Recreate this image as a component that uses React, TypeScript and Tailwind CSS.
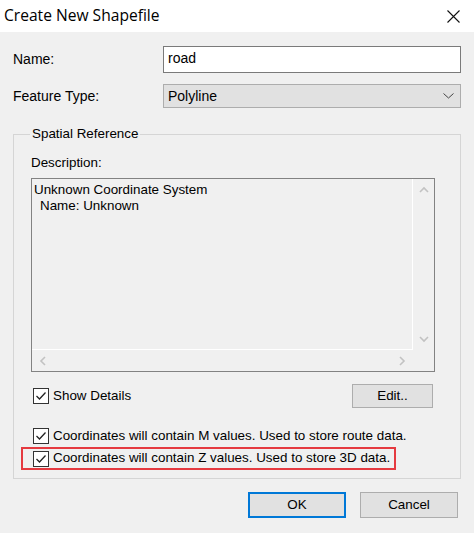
import React from 'react';

const font = { fontFamily: '"Liberation Sans", Arial, sans-serif' };

function Check() {
  return (
    <span className="flex h-[16px] w-[16px] shrink-0 items-center justify-center border border-[#333333] bg-white">
      <svg width="12" height="12" viewBox="0 0 12 12">
        <path d="M1.5 6 L4.5 9 L10.5 2.5" fill="none" stroke="#222222" strokeWidth="1.3" />
      </svg>
    </span>
  );
}

function Chevron({ dir, color = '#c2c2c2' }: { dir: 'up' | 'down' | 'left' | 'right'; color?: string }) {
  const paths = {
    up: 'M1 7 L5 3 L9 7',
    down: 'M1 3 L5 7 L9 3',
    left: 'M7 1 L3 5 L7 9',
    right: 'M3 1 L7 5 L3 9',
  };
  return (
    <svg width="10" height="10" viewBox="0 0 10 10">
      <path d={paths[dir]} fill="none" stroke={color} strokeWidth="1.6" />
    </svg>
  );
}

export default function App() {
  return (
    <div className="flex h-[533px] w-[474px] flex-col bg-[#f0f0f0] text-[13.4px] text-black" style={font}>
      {/* title bar */}
      <div className="flex h-[32px] shrink-0 items-center justify-between bg-white pl-[4px] pr-[14px]">
        <span className="text-[15.6px]" style={{ fontFamily: '"Open Sans", sans-serif' }}>Create New Shapefile</span>
        <svg width="13" height="13" viewBox="0 0 13 13">
          <path d="M0.5 0.5 L12.5 12.5 M12.5 0.5 L0.5 12.5" stroke="#111111" strokeWidth="1.1" />
        </svg>
      </div>

      <div className="flex flex-col px-[13px]">
        <div className="mt-[14px] flex h-[27px] items-center">
          <span className="w-[150px] text-[14px]">Name:</span>
          <div className="flex h-[27px] flex-1 items-center border border-[#7a7a7a] bg-white px-[4px] pb-[2px] text-[14px]">road</div>
        </div>

        <div className="mt-[11px] flex h-[24px] items-center">
          <span className="w-[150px] text-[14px]">Feature Type:</span>
          <div className="flex h-[24px] flex-1 items-center justify-between border border-[#adadad] bg-[#e1e1e1] pl-[4px] pr-[6px] text-[14px]">
            <span>Polyline</span>
            <svg width="11" height="6" viewBox="0 0 11 6">
              <path d="M0.5 0.5 L5.5 5 L10.5 0.5" fill="none" stroke="#444444" strokeWidth="1" />
            </svg>
          </div>
        </div>

        <fieldset className="mt-[18px] border border-[#d5d5d5] pb-[8px] pl-[7px]">
          <legend className="ml-[9px] px-[2px] leading-[16px]">Spatial Reference</legend>

          <div className="ml-[10px] mt-[13px] leading-[16px]">Description:</div>

          <div className="ml-[10px] mt-[7px] grid h-[194px] w-[404px] grid-cols-[1fr_21px] grid-rows-[1fr_21px] border border-[#828282]">
            <div className="border-b border-r border-white pl-[2px] pt-[3px] leading-[16px]">
              <div>Unknown Coordinate System</div>
              <div className="ml-[6px]">Name: Unknown</div>
            </div>
            <div className="flex flex-col items-center justify-between py-[6px]">
              <Chevron dir="up" />
              <Chevron dir="down" />
            </div>
            <div className="flex items-center justify-between px-[6px]">
              <Chevron dir="left" />
              <Chevron dir="right" />
            </div>
            <div />
          </div>

          <div className="ml-[10px] mt-[12px] flex h-[24px] w-[404px] items-center justify-between pl-[2px] pr-[2px]">
            <label className="flex items-center gap-[4px]">
              <Check />
              <span>Show Details</span>
            </label>
            <button className="flex h-[24px] w-[81px] items-center justify-center border border-[#adadad] bg-[#e1e1e1]">
              Edit..
            </button>
          </div>

          <label className="ml-[12px] mt-[18px] flex h-[20px] items-center gap-[4px] whitespace-nowrap">
            <Check />
            <span>Coordinates will contain M values. Used to store route data.</span>
          </label>

          <label className="mt-[1px] flex h-[23px] w-[375px] items-center gap-[4px] whitespace-nowrap border-2 border-[#e53a40] pl-[10px]">
            <Check />
            <span>Coordinates will contain Z values. Used to store 3D data.</span>
          </label>
        </fieldset>

        <div className="mt-[13px] flex justify-end gap-[14px] pr-[3px]">
          <button className="flex h-[26px] w-[98px] items-center justify-center border-2 border-[#0078d7] bg-[#e1e1e1]">
            OK
          </button>
          <button className="flex h-[26px] w-[98px] items-center justify-center border border-[#adadad] bg-[#e1e1e1]">
            Cancel
          </button>
        </div>
      </div>
    </div>
  );
}
